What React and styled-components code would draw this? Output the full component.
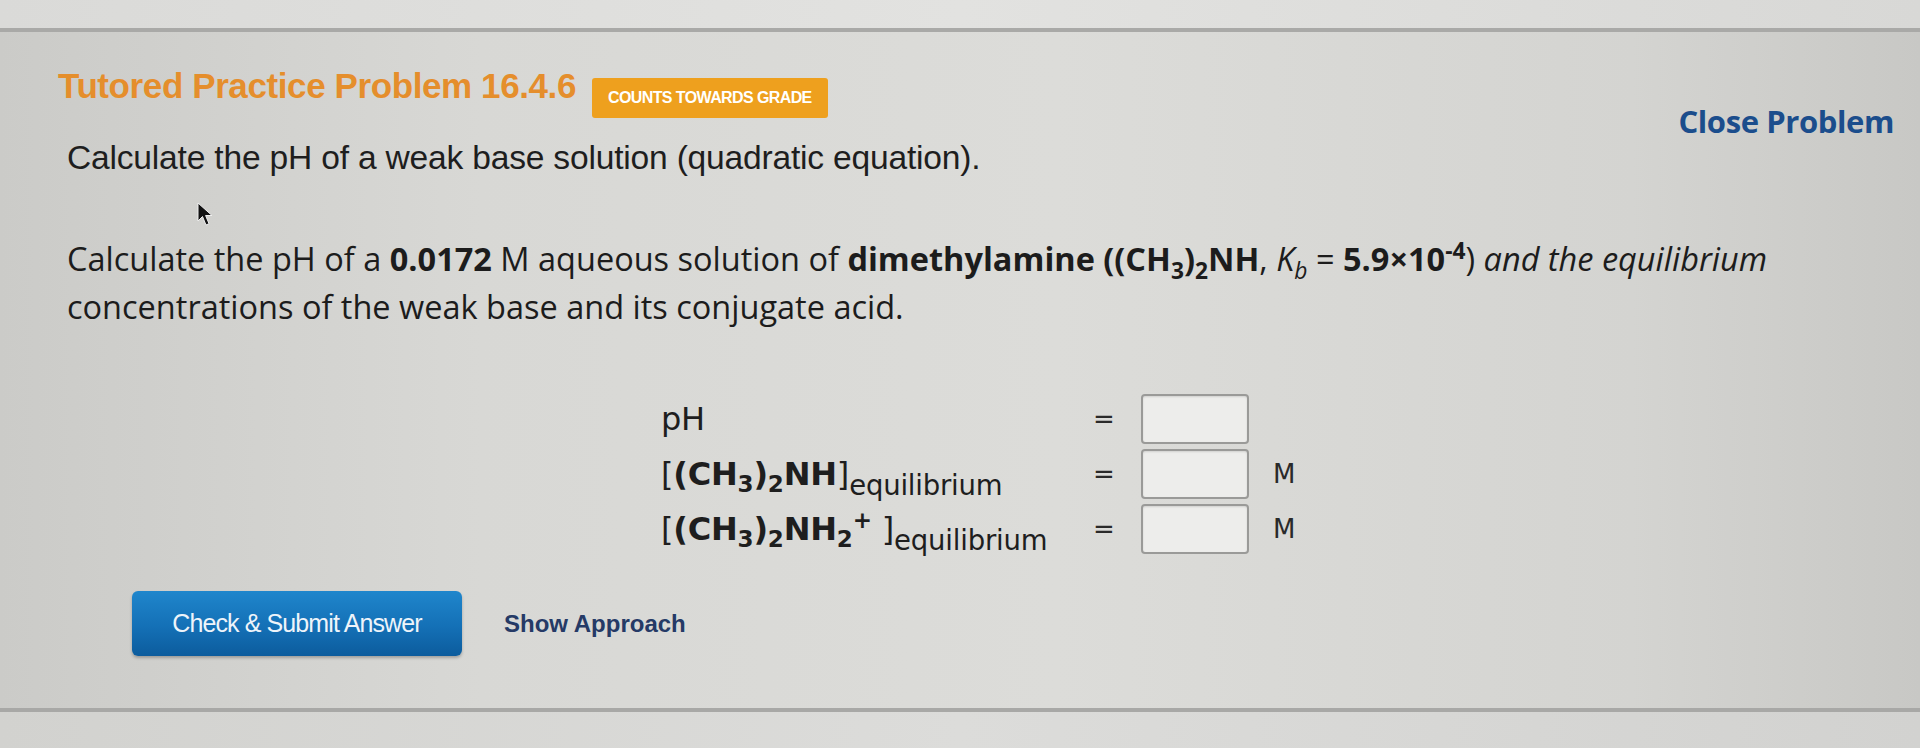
import React from "react";
import styled, { createGlobalStyle } from "styled-components";

const GlobalStyle = createGlobalStyle`
  html, body {
    margin: 0;
    padding: 0;
    height: 748px;
    overflow: hidden;
  }
  body {
    background: #d6d6d3;
  }
`;

const Screen = styled.div`
  width: 1920px;
  height: 748px;
  box-sizing: border-box;
  background: linear-gradient(90deg, #cbcbc8 0%, #d8d8d5 25%, #dcdcd9 55%, #d4d4d1 85%, #c8c8c5 100%);
  display: flex;
  flex-direction: column;
`;

const TopBar = styled.div`
  height: 28px;
  background: linear-gradient(90deg, #dadad8 0%, #e2e2e0 50%, #d8d8d6 100%);
  border-bottom: 4px solid #a9a9a7;
`;

const Content = styled.div`
  flex: 1;
  padding: 34px 26px 0 58px;
  display: flex;
  flex-direction: column;
`;

const Header = styled.header`
  display: flex;
  justify-content: space-between;
  align-items: flex-start;
`;

const HeaderMain = styled.div`
  display: flex;
  flex-direction: column;
  gap: 21px;
`;

const TitleRow = styled.div`
  display: flex;
  align-items: flex-start;
  gap: 16px;
`;

const Title = styled.h1`
  margin: 0;
  font-family: "Liberation Sans", Arial, sans-serif;
  font-size: 35px;
  font-weight: 700;
  letter-spacing: -0.4px;
  color: #e58e2c;
`;

const Badge = styled.span`
  display: inline-flex;
  align-items: center;
  height: 40px;
  padding: 0 16px;
  margin-top: 12px;
  border-radius: 3px;
  background: #eea01e;
  color: #fff;
  font-family: "Liberation Sans", Arial, sans-serif;
  font-size: 16px;
  font-weight: 700;
  letter-spacing: -0.6px;
  text-transform: uppercase;
`;

const Subtitle = styled.p`
  margin: 0 0 0 9px;
  font-family: "Liberation Sans", Arial, sans-serif;
  font-size: 33.6px;
  color: #1e1e1e;
  letter-spacing: -0.2px;
`;

const CloseLink = styled.a`
  margin-top: 34px;
  font-family: "Open Sans", sans-serif;
  font-size: 31px;
  font-weight: 700;
  letter-spacing: -0.4px;
  color: #1b4d8c;
  text-decoration: none;
  cursor: pointer;
`;

const Question = styled.p`
  position: relative;
  margin: 58px 0 0 9px;
  max-width: 1800px;
  font-family: "Open Sans", sans-serif;
  font-size: 32.5px;
  line-height: 48px;
  color: #1c1c1c;

  b {
    font-weight: 700;
  }
  i {
    font-style: italic;
  }
  sub, sup {
    font-size: 0.7em;
    line-height: 0;
  }
`;

const Pointer = styled.svg`
  position: absolute;
  left: 128px;
  top: -34px;
  width: 24px;
  height: 26px;
`;

const AnswerGrid = styled.div`
  margin: 60px 0 0 603px;
  display: grid;
  grid-template-columns: 406px 46px 108px 40px;
  grid-auto-rows: 55px;
  align-items: center;
  column-gap: 14px;
  font-family: "DejaVu Sans", Verdana, sans-serif;
  font-size: 32px;
  color: #1e1e1e;
`;

const Label = styled.div`
  white-space: nowrap;
  letter-spacing: -0.2px;

  b {
    font-weight: 700;
  }
  sub {
    font-size: 0.72em;
    line-height: 0;
  }
  sup {
    font-size: 0.72em;
    line-height: 0;
  }
  .eq {
    font-size: 0.86em;
    vertical-align: -0.35em;
    line-height: 0;
  }
`;

const Equals = styled.span`
  text-align: center;
  font-size: 26px;
  color: #2a2a2a;
`;

const Field = styled.input`
  box-sizing: border-box;
  width: 108px;
  height: 50px;
  border: 2px solid #9a9a98;
  border-radius: 4px;
  background: #ededeb;
  box-shadow: inset 0 1px 2px rgba(0, 0, 0, 0.12);
`;

const Unit = styled.span`
  margin-left: 10px;
  font-size: 26px;
  color: #2a2a2a;
`;

const Actions = styled.div`
  margin: 35px 0 0 74px;
  display: flex;
  align-items: center;
  gap: 42px;
`;

const SubmitButton = styled.button`
  width: 330px;
  height: 65px;
  border: none;
  border-radius: 6px;
  background: linear-gradient(180deg, #1f86cc 0%, #1470b6 55%, #0c5c9d 100%);
  box-shadow: 0 2px 3px rgba(0, 0, 0, 0.25);
  color: #eef4fa;
  font-family: "Liberation Sans", Arial, sans-serif;
  font-size: 25px;
  letter-spacing: -0.9px;
  cursor: pointer;
`;

const ApproachLink = styled.a`
  font-family: "Liberation Sans", Arial, sans-serif;
  font-size: 24px;
  font-weight: 700;
  color: #253a66;
  cursor: pointer;
`;

const BottomRule = styled.div`
  margin-top: auto;
  height: 36px;
  border-top: 4px solid #a8a8a6;
  background: linear-gradient(90deg, #d2d2cf 0%, #dcdcda 50%, #d2d2d0 100%);
`;

export default function App() {
  return (
    <>
      <GlobalStyle />
      <Screen>
        <TopBar />
        <Content>
          <Header>
            <HeaderMain>
              <TitleRow>
                <Title>Tutored Practice Problem 16.4.6</Title>
                <Badge>Counts towards grade</Badge>
              </TitleRow>
              <Subtitle>Calculate the pH of a weak base solution (quadratic equation).</Subtitle>
            </HeaderMain>
            <CloseLink>Close Problem</CloseLink>
          </Header>

          <Question>
            <Pointer viewBox="0 0 24 26">
              <path d="M3 2 L3 20 L7.5 15.5 L11 24 L14 22.7 L10.6 14.5 L17 14.5 Z" fill="#111" stroke="#eee" strokeWidth="1" />
            </Pointer>
            Calculate the pH of a <b>0.0172</b> M aqueous solution of{" "}
            <b>
              dimethylamine ((CH<sub>3</sub>)<sub>2</sub>NH
            </b>
            , <i>K</i>
            <sub>
              <i>b</i>
            </sub>{" "}
            = <b>5.9×10</b>
            <sup>
              <b>-4</b>
            </sup>
            ) <i>and the equilibrium</i>
            <br />
            concentrations of the weak base and its conjugate acid.
          </Question>

          <AnswerGrid>
            <Label>pH</Label>
            <Equals>=</Equals>
            <Field type="text" />
            <Unit />

            <Label>
              [<b>
                (CH<sub>3</sub>)<sub>2</sub>NH
              </b>]<span className="eq">equilibrium</span>
            </Label>
            <Equals>=</Equals>
            <Field type="text" />
            <Unit>M</Unit>

            <Label>
              [<b>
                (CH<sub>3</sub>)<sub>2</sub>NH<sub>2</sub>
                <sup>+</sup>
              </b>{" "}
              ]<span className="eq">equilibrium</span>
            </Label>
            <Equals>=</Equals>
            <Field type="text" />
            <Unit>M</Unit>
          </AnswerGrid>

          <Actions>
            <SubmitButton>Check &amp; Submit Answer</SubmitButton>
            <ApproachLink>Show Approach</ApproachLink>
          </Actions>
        </Content>
        <BottomRule />
      </Screen>
    </>
  );
}
